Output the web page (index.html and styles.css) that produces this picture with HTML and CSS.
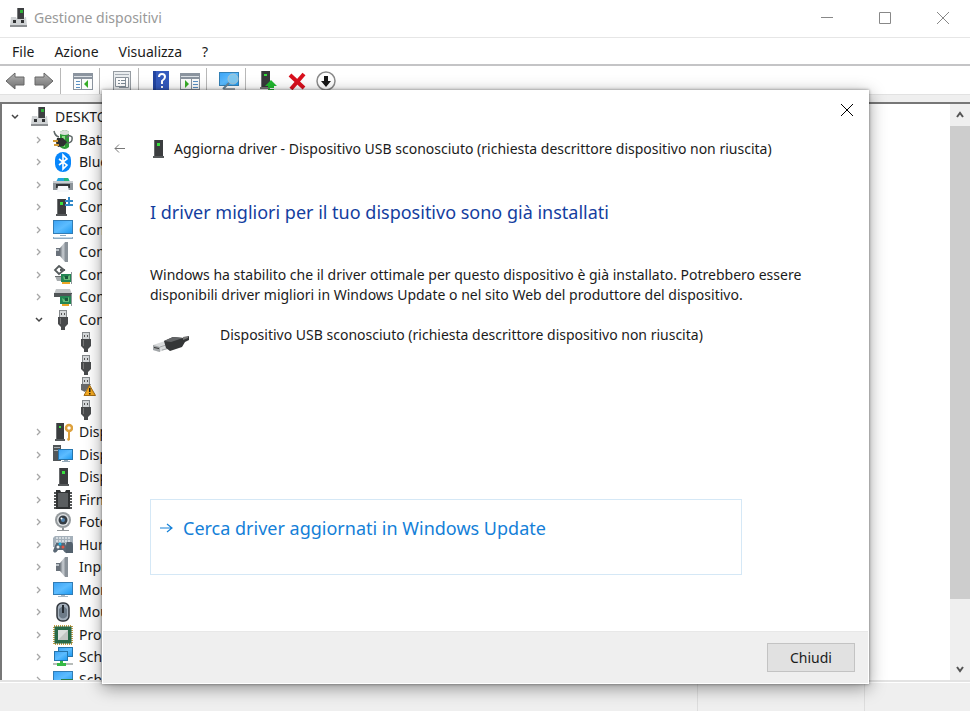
FILE: index.html
```html
<!DOCTYPE html>
<html lang="it">
<head>
<meta charset="utf-8">
<title>Gestione dispositivi</title>
<link rel="stylesheet" href="styles.css">
</head>
<body>
<svg class="sprite" aria-hidden="true">
  <defs>
    <linearGradient id="blue" x1="0" y1="0" x2="1" y2="1"><stop offset="0" stop-color="#3da4f5"/><stop offset=".5" stop-color="#5cbcff"/><stop offset="1" stop-color="#1f9bf2"/></linearGradient>
    <linearGradient id="metal" x1="0" y1="0" x2="1" y2="0"><stop offset="0" stop-color="#6d747b"/><stop offset=".5" stop-color="#c9ced3"/><stop offset="1" stop-color="#80878e"/></linearGradient>
    <linearGradient id="grayarrow" x1="0" y1="0" x2="0" y2="1"><stop offset="0" stop-color="#b4b4b4"/><stop offset="1" stop-color="#6f6f6f"/></linearGradient>
  </defs>
  <symbol id="computer-box" viewBox="0 0 20 20"><path d="M9 0h7v11H9z" fill="#3d3f41"/><path d="M9 0h1v11H9z" fill="#77797b"/><path d="M12 2h3v3h-3z" fill="#2fae38"/><path d="M3 9h5l1 2h7l1-2h1l1 8v2H2v-2z" fill="#cfd2d4"/><path d="M2 17h17v2H2z" fill="#8d9093"/><path d="M5 12h3v3H5zM13 12h3v3h-3z" fill="#303234"/></symbol>
  <symbol id="tower" viewBox="0 0 20 20"><path d="M6 1h9v16H6z" fill="#3b3d3f"/><path d="M6 1h1v16H6z" fill="#66696b"/><path d="M9 4h3v3H9z" fill="#39e03f"/><path d="M5 17h11v2H5z" fill="#55585a"/></symbol>
  <symbol id="battery" viewBox="0 0 20 20"><path d="M7 2q5-4 9 0v15q-4 4-9 0z" fill="#2c9a36"/><path d="M7 2q5-4 9 0v2q-4 2-9 0z" fill="#d9e0d9"/><path d="M9 6h3v11l-3-1z" fill="#8be084"/><path d="M1 1q1 5 5 6M14 13q6 0 5-6-3-3-5 1" fill="none" stroke="#5f6868" stroke-width="1.5"/><path d="M4 8l6 0 4 4-3 4-6 1-2-4z" fill="#2d3030"/><path d="M0 11h5M1 15h5" stroke="#d19a36" stroke-width="2"/></symbol>
  <symbol id="bluetooth" viewBox="0 0 20 20"><rect x="2" width="16" height="20" rx="8" fill="#0786fb"/><path d="M6 7l8 6-4 4V3l4 4-8 6" fill="none" stroke="#fff" stroke-width="1.6"/></symbol>
  <symbol id="printer" viewBox="0 0 20 20"><path d="M5 3h10l2 4H3z" fill="#20a6df"/><path d="M11 3h4l2 4h-6z" fill="#25b579"/><path d="M0 6h20v9H0z" fill="#8d959a"/><path d="M0 6h20v2H0z" fill="#c6cbcf"/><path d="M3 9h14v4H3z" fill="#303438"/><path d="M5 11h10l1 6H4z" fill="#f6f8fa"/></symbol>
  <symbol id="tower-plus" viewBox="0 0 20 20"><path d="M4 2h9v15H4z" fill="#3b3d3f"/><path d="M4 2h1v15H4z" fill="#707274"/><path d="M7 5h3v3H7z" fill="#39e03f"/><path d="M3 17h11v2H3z" fill="#55585a"/><path d="M16 0v9M12 4h8M12 8h8" stroke="#3189c8" stroke-width="2"/></symbol>
  <symbol id="monitor-wide" viewBox="0 0 20 20"><path d="M0 0h20v14H0z" fill="#327db6"/><path d="M1 1h18v12H1z" fill="url(#blue)"/><path d="M7 15h6v1H7zM0 17h20v2H0z" fill="#8eabc2"/><path d="M1 17h18v1H1z" fill="#c3d8e7"/></symbol>
  <symbol id="monitor" viewBox="0 0 20 20"><path d="M0 2h20v13H0z" fill="#327db6"/><path d="M1 3h18v11H1z" fill="url(#blue)"/><path d="M8 15h4v1h3v1H5v-1h3z" fill="#a3b5c2"/></symbol>
  <symbol id="speaker" viewBox="0 0 20 20"><path d="M3 6h4v8H3z" fill="#69717a"/><path d="M7 6l5-6h1v20h-1l-5-6z" fill="url(#metal)"/><path d="M12 0h3v20h-3z" fill="#8a9299"/><path d="M3 7h3v2H3z" fill="#b9c0c6"/></symbol>
  <symbol id="controller" viewBox="0 0 20 20"><path d="M6 1l5 4-5 4-4-4z" fill="#fff" stroke="#555b5c" stroke-width="1.8"/><path d="M7 5h5" stroke="#555b5c" stroke-width="2"/><path d="M2 11h10v5H4z" fill="#a6abad"/><path d="M2 11h10v1H2z" fill="#686e70"/><path d="M8 9h11v8H8z" fill="#238553"/><path d="M10 11l3 2 4-3v5h-6z" fill="#67bb77"/><path d="M12 11h3v3h-3z" fill="#18583c"/><path d="M9 17h8v2H9z" fill="#eba627"/><path d="M18 7h1v12h-1z" fill="#90989a"/></symbol>
  <symbol id="drive-card" viewBox="0 0 20 20"><path d="M3 2h14l2 5H1z" fill="#c1c4c6"/><path d="M1 6h18v4H1z" fill="#505557"/><path d="M7 9h12v8H7z" fill="#238553"/><path d="M9 11l3 2 4-3v5h-6z" fill="#67bb77"/><path d="M12 11h3v3h-3z" fill="#18583c"/><path d="M9 17h7v2H9z" fill="#eba627"/><path d="M18 7h1v12h-1z" fill="#90989a"/></symbol>
  <symbol id="usb" viewBox="0 0 20 20"><path d="M6 0h8v7H6z" fill="#85898c"/><path d="M7 1h6v6H7z" fill="#d4d7d9"/><path d="M8 3h1v2H8zM11 3h1v2h-1z" fill="#555"/><path d="M5 7h10v7l-3 3v3H8v-3l-3-3z" fill="#484a4c"/><path d="M7 8h1v6H7z" fill="#777"/></symbol>
  <symbol id="usb-warning" viewBox="0 0 20 20"><path d="M6 0h8v7H6z" fill="#85898c"/><path d="M7 1h6v6H7z" fill="#d4d7d9"/><path d="M8 3h1v2H8zM11 3h1v2h-1z" fill="#555"/><path d="M5 7h10L9 15l-4-2z" fill="#686a6c"/><path d="M13.500 8L8 18.500h11.500z" fill="#f4a91f" stroke="#a36c14"/><path d="M13 11h1.500v4H13zM13 16h1.500v1.500H13z" fill="#2b2411"/></symbol>
  <symbol id="tower-key" viewBox="0 0 20 20"><path d="M3 1h8v16H3z" fill="#393c3e"/><path d="M3 1h1v16H3z" fill="#6d7072"/><path d="M6 4h2v2H6z" fill="#39e03f"/><path d="M2 17h10v2H2z" fill="#565a5c"/><circle cx="16" cy="6" r="3" fill="none" stroke="#dda13d" stroke-width="2.5"/><path d="M15 9h2v9l-2 1-1-2 1-1z" fill="#dda13d"/></symbol>
  <symbol id="system" viewBox="0 0 20 20"><path d="M0 0h8v16H0z" fill="#515658"/><path d="M1 2h6v1H1zM1 5h6v1H1z" fill="#a9afb2"/><path d="M5 4h15v11H5z" fill="#2575ad"/><path d="M6 5h13v9H6z" fill="url(#blue)"/><path d="M11 15h4v1h2v1H9v-1h2z" fill="#93a8b8"/></symbol>
  <symbol id="firmware" viewBox="0 0 20 20"><path d="M3 0h4l1 2h4l1-2h4v19H3z" fill="#303233"/><path d="M5 3h10v14H5z" fill="#5b5e60"/><path d="M2 2v17M18 2v17" stroke="#535657" stroke-width="2" stroke-dasharray="2 1"/></symbol>
  <symbol id="camera" viewBox="0 0 20 20"><circle cx="10" cy="8" r="8" fill="#969b9e"/><circle cx="10" cy="8" r="6" fill="#e0e3e5"/><circle cx="10" cy="8" r="4.500" fill="#353c43"/><circle cx="10" cy="8" r="2" fill="#4f81ad"/><circle cx="8.500" cy="6.500" r="1" fill="#fff"/><path d="M9 16h2v2h5v1H4v-1h5z" fill="#909598"/></symbol>
  <symbol id="hid" viewBox="0 0 20 20"><path d="M2 1h18v11H0V3z" fill="#a5b1bb"/><path d="M3 3h15M3 6h14M2 9h16" stroke="#e4e9ed" stroke-width="1.5" stroke-dasharray="2 1"/><path d="M3 8h9l3 9q-2 3-5-2H5q-3 5-5 1z" fill="#596774"/><path d="M14 7h4q2 0 2 4v7h-7v-7q0-3 1-4z" fill="#53616d"/><circle cx="7" cy="9" r="1.500" fill="#18b5ea"/><circle cx="5" cy="12" r="1.500" fill="#eee"/><circle cx="10" cy="12" r="1.500" fill="#e35443"/></symbol>
  <symbol id="mouse" viewBox="0 0 20 20"><rect x="4" y="1" width="12" height="18" rx="5" fill="#a3afbb" stroke="#30363d" stroke-width="1.5"/><path d="M6 7q4-5 8 0v7q-4 5-8 0z" fill="#6d7b88"/><path d="M9 3h2v8H9z" fill="#252b31"/></symbol>
  <symbol id="processor" viewBox="0 0 20 20"><path d="M1 1h18v18H1z" fill="none" stroke="#c39b43" stroke-width="2" stroke-dasharray="1 1"/><path d="M1.500 1.500h17v17h-17z" fill="#286948"/><path d="M5 5h10v10H5z" fill="#dcdedd"/><path d="M5 15L15 5v10z" fill="#c2c5c3"/></symbol>
  <symbol id="network" viewBox="0 0 20 20"><path d="M5 0h15v10H5z" fill="#2575ad"/><path d="M6 1h13v8H6z" fill="url(#blue)"/><path d="M1 4h14v10H1z" fill="#2575ad"/><path d="M2 5h12v8H2z" fill="url(#blue)"/><path d="M0 16h20v2H0z" fill="#b7bcb9"/><path d="M7 14h3v2h3v3H4v-3h3z" fill="#36ba45"/></symbol>
  <symbol id="display" viewBox="0 0 20 20"><path d="M0 1h20v13H0z" fill="#327db6"/><path d="M1 2h18v11H1z" fill="url(#blue)"/><path d="M8 9h12v8H8z" fill="#287e4a"/></symbol>
  <symbol id="arrow-left" viewBox="0 0 20 20"><path d="M1 10l9-8v4h9v8h-9v4z" fill="url(#grayarrow)" stroke="#666"/></symbol>
  <symbol id="arrow-right" viewBox="0 0 20 20"><path d="M19 10l-9-8v4H1v8h9v4z" fill="url(#grayarrow)" stroke="#666"/></symbol>
  <symbol id="pane-left" viewBox="0 0 20 20"><path d="M0 2h20v17H0z" fill="#8b949f"/><path d="M1 5h18v1H1z" fill="#dce1e6"/><path d="M1 8h7v10H1zM9 8h10v10H9z" fill="#fbfcfc"/><path d="M3 10.500h4M3 13.500h4M3 16.500h4" stroke="#5a91c5"/><path d="M11 13l4-4v8z" fill="#37ad28"/></symbol>
  <symbol id="pane-right" viewBox="0 0 20 20"><path d="M0 2h20v17H0z" fill="#8b949f"/><path d="M1 5h18v1H1z" fill="#dce1e6"/><path d="M1 8h10v10H1zM12 8h7v10h-7z" fill="#fbfcfc"/><path d="M13 10.500h5M13 13.500h5M13 16.500h5" stroke="#5a91c5"/><path d="M9 13L5 9v8z" fill="#37ad28"/></symbol>
  <symbol id="properties" viewBox="0 0 20 20"><path d="M1 0h18v20H1z" fill="#969ca2"/><path d="M2 1h16v18H2z" fill="#e9ecee"/><path d="M3 3.500h14" stroke="#a6adb4"/><path d="M3.500 6.500h10v9h-10zM7 6.500h9.500v10H7" fill="#fff" stroke="#8c949c"/><path d="M6 9.500h8M6 12.500h8M6 15.500h8" stroke="#7f8c96" stroke-dasharray="2 1 5"/></symbol>
  <symbol id="help" viewBox="0 0 20 20"><path d="M2 0h16v20H2z" fill="#345abd"/><path d="M2 0h3v20H2z" fill="#2345a0"/><path d="M8 6q0-3 3-3t3 3q0 2-3 4v3M11 15v2" fill="none" stroke="#fff" stroke-width="2"/></symbol>
  <symbol id="scan" viewBox="0 0 20 20"><path d="M0 1h20v14H0z" fill="#3381b6"/><path d="M1 2h18v12H1z" fill="url(#blue)"/><path d="M5 17h11v2H5z" fill="#a1abb2"/><circle cx="14" cy="8" r="5" fill="#7fc8f0" stroke="#a9c4d2"/><path d="M10 12l-6 6" stroke="#668498" stroke-width="2"/></symbol>
  <symbol id="update" viewBox="0 0 20 20"><path d="M3 0h9v16H3z" fill="#37393b"/><path d="M3 0h1v16H3z" fill="#707274"/><path d="M6 3h3v2H6z" fill="#35dd3b"/><path d="M2 16h10v2H2z" fill="#777"/><path d="M13 9l6 6h-3v2h-6v-2H7zM10 18h6v2h-6z" fill="#20b72e"/></symbol>
  <symbol id="remove" viewBox="0 0 20 20"><path d="M3 4l14 13M17 3L4 18" stroke="#d9101d" stroke-width="4"/></symbol>
  <symbol id="down-circle" viewBox="0 0 20 20"><circle cx="10" cy="10" r="9" fill="#fff" stroke="#8c8c8c" stroke-width="1.500"/><path d="M8 5h4v5h3l-5 6-5-6h3z" fill="#171717"/></symbol>
  <symbol id="chevron" viewBox="0 0 10 10"><path d="M3 2l3 3-3 3" fill="none" stroke="#a6a6a6" stroke-width="1.300"/></symbol>
  <symbol id="chevron-down" viewBox="0 0 10 10"><path d="M2 3l3 3 3-3" fill="none" stroke="#444" stroke-width="1.500"/></symbol>
  <symbol id="close" viewBox="0 0 14 14"><path d="M1 1l12 12M13 1L1 13" fill="none" stroke="currentColor"/></symbol>
</svg>

<div class="window">
  <header class="titlebar">
    <svg class="icon"><use href="#computer-box"/></svg>
    <h1 class="app-name">Gestione dispositivi</h1>
    <div class="window-controls">
      <button type="button" aria-label="Riduci a icona"><svg viewBox="0 0 14 14"><path d="M1 6.500h12" stroke="currentColor"/></svg></button>
      <button type="button" aria-label="Ingrandisci"><svg viewBox="0 0 14 14"><path d="M1.500 1.500h11v11h-11z" fill="none" stroke="currentColor"/></svg></button>
      <button type="button" aria-label="Chiudi finestra"><svg><use href="#close"/></svg></button>
    </div>
  </header>
  <nav class="menubar">
    <button type="button">File</button>
    <button type="button">Azione</button>
    <button type="button">Visualizza</button>
    <button type="button">?</button>
  </nav>
  <div class="toolbar" role="toolbar" aria-label="Strumenti">
    <button type="button" aria-label="Indietro"><svg class="icon"><use href="#arrow-left"/></svg></button>
    <button type="button" aria-label="Avanti"><svg class="icon"><use href="#arrow-right"/></svg></button>
    <span class="separator"></span>
    <button type="button" aria-label="Albero della console"><svg class="icon"><use href="#pane-left"/></svg></button>
    <span class="separator"></span>
    <button type="button" aria-label="Proprietà"><svg class="icon"><use href="#properties"/></svg></button>
    <span class="separator"></span>
    <button type="button" aria-label="Guida"><svg class="icon"><use href="#help"/></svg></button>
    <button type="button" aria-label="Riquadro azioni"><svg class="icon"><use href="#pane-right"/></svg></button>
    <span class="separator"></span>
    <button type="button" aria-label="Rileva modifiche hardware"><svg class="icon"><use href="#scan"/></svg></button>
    <span class="separator"></span>
    <button type="button" aria-label="Aggiorna driver"><svg class="icon"><use href="#update"/></svg></button>
    <button type="button" aria-label="Disinstalla dispositivo"><svg class="icon"><use href="#remove"/></svg></button>
    <button type="button" aria-label="Disabilita dispositivo"><svg class="icon"><use href="#down-circle"/></svg></button>
  </div>
  <main class="workspace">
    <ul class="tree" role="tree" aria-label="Dispositivi">
      <li class="root" role="treeitem"><svg class="twisty"><use href="#chevron-down"/></svg><svg class="icon"><use href="#computer-box"/></svg>DESKTOP</li>
      <li role="treeitem"><svg class="twisty"><use href="#chevron"/></svg><svg class="icon"><use href="#battery"/></svg>Batterie</li>
      <li role="treeitem"><svg class="twisty"><use href="#chevron"/></svg><svg class="icon"><use href="#bluetooth"/></svg>Bluetooth</li>
      <li role="treeitem"><svg class="twisty"><use href="#chevron"/></svg><svg class="icon"><use href="#printer"/></svg>Code</li>
      <li role="treeitem"><svg class="twisty"><use href="#chevron"/></svg><svg class="icon"><use href="#tower-plus"/></svg>Comp.</li>
      <li role="treeitem"><svg class="twisty"><use href="#chevron"/></svg><svg class="icon"><use href="#monitor-wide"/></svg>Computer</li>
      <li role="treeitem"><svg class="twisty"><use href="#chevron"/></svg><svg class="icon"><use href="#speaker"/></svg>Controller</li>
      <li role="treeitem"><svg class="twisty"><use href="#chevron"/></svg><svg class="icon"><use href="#controller"/></svg>Controller</li>
      <li role="treeitem"><svg class="twisty"><use href="#chevron"/></svg><svg class="icon"><use href="#drive-card"/></svg>Controller</li>
      <li role="treeitem"><svg class="twisty"><use href="#chevron-down"/></svg><svg class="icon"><use href="#usb"/></svg>Controller</li>
      <li class="child" role="treeitem" aria-label="Dispositivo USB"><svg class="icon"><use href="#usb"/></svg></li>
      <li class="child" role="treeitem" aria-label="Dispositivo USB"><svg class="icon"><use href="#usb"/></svg></li>
      <li class="child" role="treeitem" aria-label="Dispositivo USB sconosciuto"><svg class="icon"><use href="#usb-warning"/></svg></li>
      <li class="child" role="treeitem" aria-label="Dispositivo USB"><svg class="icon"><use href="#usb"/></svg></li>
      <li role="treeitem"><svg class="twisty"><use href="#chevron"/></svg><svg class="icon"><use href="#tower-key"/></svg>Dispositivi</li>
      <li role="treeitem"><svg class="twisty"><use href="#chevron"/></svg><svg class="icon"><use href="#system"/></svg>Dispositivi</li>
      <li role="treeitem"><svg class="twisty"><use href="#chevron"/></svg><svg class="icon"><use href="#tower"/></svg>Dispositivi</li>
      <li role="treeitem"><svg class="twisty"><use href="#chevron"/></svg><svg class="icon"><use href="#firmware"/></svg>Firmware</li>
      <li role="treeitem"><svg class="twisty"><use href="#chevron"/></svg><svg class="icon"><use href="#camera"/></svg>Foto</li>
      <li role="treeitem"><svg class="twisty"><use href="#chevron"/></svg><svg class="icon"><use href="#hid"/></svg>Human</li>
      <li role="treeitem"><svg class="twisty"><use href="#chevron"/></svg><svg class="icon"><use href="#speaker"/></svg>Input</li>
      <li role="treeitem"><svg class="twisty"><use href="#chevron"/></svg><svg class="icon"><use href="#monitor"/></svg>Monitor</li>
      <li role="treeitem"><svg class="twisty"><use href="#chevron"/></svg><svg class="icon"><use href="#mouse"/></svg>Mouse</li>
      <li role="treeitem"><svg class="twisty"><use href="#chevron"/></svg><svg class="icon"><use href="#processor"/></svg>Processori</li>
      <li role="treeitem"><svg class="twisty"><use href="#chevron"/></svg><svg class="icon"><use href="#network"/></svg>Schede</li>
      <li role="treeitem"><svg class="twisty"><use href="#chevron"/></svg><svg class="icon"><use href="#display"/></svg>Schede</li>
    </ul>
    <div class="scrollbar">
      <button type="button" aria-label="Scorri su"><svg viewBox="0 0 10 10"><path d="M2 7l3-4 3 4" fill="none" stroke="#555" stroke-width="2"/></svg></button>
      <div class="track"><div class="thumb"></div></div>
      <button type="button" aria-label="Scorri giù"><svg viewBox="0 0 10 10"><path d="M2 3l3 4 3-4" fill="none" stroke="#555" stroke-width="2"/></svg></button>
    </div>
  </main>
  <footer class="statusbar"><span></span><span></span><span></span></footer>

  <section class="dialog" role="dialog" aria-labelledby="dialog-title">
    <div class="dialog-top"><button type="button" aria-label="Chiudi finestra di dialogo"><svg><use href="#close"/></svg></button></div>
    <div class="dialog-caption">
      <button type="button" aria-label="Indietro"><svg viewBox="0 0 12 12"><path d="M11 5.500H1M5 1.500l-4 4 4 4" fill="none" stroke="#777"/></svg></button>
      <svg class="icon"><use href="#tower"/></svg>
      <span id="dialog-title">Aggiorna driver - Dispositivo USB sconosciuto (richiesta descrittore dispositivo non riuscita)</span>
    </div>
    <div class="dialog-body">
      <h2>I driver migliori per il tuo dispositivo sono già installati</h2>
      <p class="message">Windows ha stabilito che il driver ottimale per questo dispositivo è già installato. Potrebbero essere<br>disponibili driver migliori in Windows Update o nel sito Web del produttore del dispositivo.</p>
      <div class="device">
        <svg class="plug" viewBox="0 0 40 20"><path d="M3 12l12-4 5 7-11 4-6-2z" fill="#d8dadb"/><path d="M3 12l7 2v5l-7-2z" fill="#a2a6a8"/><path d="M4 14l5 1v1l-5-1z" fill="#333"/><path d="M10 14l9-3M12 17l8-2" stroke="#a3a6a8"/><path d="M14 8l9-4 11 1 5-2v4l-4 2-3 5-12 4-4-3z" fill="#343637"/><path d="M14 8l9-4 10 1-12 4z" fill="#636567"/><path d="M33 4l5-1v2l-5 2z" fill="#777"/></svg>
        <span>Dispositivo USB sconosciuto (richiesta descrittore dispositivo non riuscita)</span>
      </div>
      <button class="command" type="button"><svg viewBox="0 0 14 14"><path d="M1 7h12M8 3l5 4-5 4" fill="none" stroke="currentColor" stroke-width="1.200"/></svg><span>Cerca driver aggiornati in Windows Update</span></button>
    </div>
    <div class="dialog-footer"><button type="button">Chiudi</button></div>
  </section>
</div>
</body>
</html>
```
FILE: styles.css
```css
* { box-sizing: border-box; }

body {
  margin: 0;
  color: #1b1b1b;
  background: #fff;
  font: 14px/20px "Noto Sans", "Open Sans", sans-serif;
}

button {
  margin: 0;
  padding: 0;
  border: 0;
  background: none;
  color: inherit;
  font: inherit;
}

svg { display: block; flex: none; }
.sprite { position: absolute; width: 0; height: 0; }
.icon { width: 20px; height: 20px; }

.window {
  position: relative;
  display: flex;
  flex-direction: column;
  height: 100vh;
  overflow: hidden;
}

.titlebar {
  display: flex;
  flex: none;
  align-items: center;
  gap: 6px;
  height: 38px;
  padding: 0 0 2px 8px;
  border-bottom: 1px solid #e6e6e6;
  color: #999;
}
.app-name { margin: 0; font-size: 14px; font-weight: 400; }
.window-controls { display: flex; gap: 4px; margin-left: auto; }
.window-controls button { display: grid; place-items: center; width: 54px; height: 34px; color: #888; }
.window-controls svg, .dialog-top svg { width: 14px; height: 14px; }

.menubar {
  display: flex;
  flex: none;
  gap: 20px;
  height: 28px;
  padding: 2px 12px 0;
  border-bottom: 2px solid #c4c4c6;
}

.toolbar {
  display: flex;
  flex: none;
  align-items: center;
  gap: 1px;
  height: 29px;
  padding: 1px 0 0 1px;
  border-bottom: 1px solid #e2e2e2;
}
.toolbar button { display: grid; place-items: center; width: 28px; height: 28px; }
.separator { width: 1px; height: 26px; margin: 0 7px 0 1px; background: #b8b8b8; }

.workspace {
  display: flex;
  flex: 1;
  min-height: 0;
  border-top: 7px solid #efefef;
  border-bottom: 2px solid #e3e3e3;
}
.tree {
  flex: 1;
  margin: 0;
  padding: 2px 0 0 8px;
  overflow: hidden;
  border-top: 2px solid #777;
  border-left: 2px solid #777;
  list-style: none;
}
.tree li { display: flex; align-items: center; height: 22px; padding-left: 24px; white-space: nowrap; }
.tree li:nth-child(even) { height: 23px; }
.tree .root { padding-left: 0; }
.tree .child { padding-left: 66px; }
.twisty { width: 10px; height: 10px; margin-right: 9px; }
.tree .icon { margin-right: 6px; }

.scrollbar { display: flex; flex-direction: column; width: 20px; border-top: 2px solid #777; background: #efefef; }
.scrollbar button { display: grid; place-items: center; height: 22px; }
.scrollbar svg { width: 10px; height: 10px; }
.track { flex: 1; }
.thumb { height: 89%; background: #cdcdcd; }

.statusbar {
  display: grid;
  flex: none;
  grid-template-columns: 1fr 167px 106px;
  height: 29px;
  border-top: 1px solid #fff;
  background: #efefef;
}
.statusbar span + span { border-left: 1px solid #ddd; }

.dialog {
  position: absolute;
  inset: 90px 101px 27px 102px;
  display: flex;
  flex-direction: column;
  border: 1px solid #fff;
  background: #fff;
  box-shadow: 0 4px 16px rgba(0, 0, 0, .4), 0 0 3px rgba(0, 0, 0, .45);
}
.dialog-top { display: flex; justify-content: flex-end; color: #000; }
.dialog-top button { display: grid; place-items: center; width: 42px; height: 38px; }
.dialog-caption { display: flex; align-items: center; height: 40px; padding-left: 11px; }
.dialog-caption button svg { width: 12px; height: 12px; }
.dialog-caption .icon { margin: 0 6px 0 22px; }
.dialog-body { flex: 1; padding: 30px 48px 0 47px; }
.dialog h2 { margin: 0 0 40px; color: #143e9f; font-size: 18px; line-height: 26px; font-weight: 400; }
.message { margin: 0 0 20px; }
.device { display: flex; align-items: flex-start; gap: 30px; }
.plug { width: 40px; height: 20px; margin-top: 8px; }
.command {
  display: flex;
  align-items: flex-start;
  gap: 10px;
  width: 100%;
  max-width: 592px;
  height: 76px;
  margin-top: 146px;
  padding: 15px 8px;
  border: 1px solid #d5e8f6;
  color: #1480d8;
  font-size: 18px;
  line-height: 26px;
  text-align: left;
}
.command svg { width: 14px; height: 14px; margin-top: 6px; }
.dialog-footer { display: flex; justify-content: flex-end; padding: 11px 13px; border-top: 1px solid #e8e8e8; background: #efefef; }
.dialog-footer button { width: 88px; height: 29px; border: 1px solid #c3c3c3; background: #e1e1e1; }
```
